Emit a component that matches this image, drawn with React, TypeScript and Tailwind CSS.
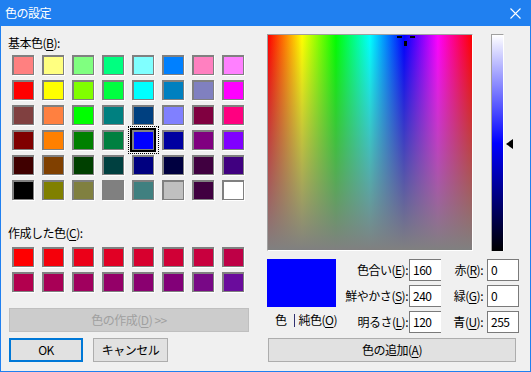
import React from 'react';

const basicColors = [
  ['#FF8080', '#FFFF80', '#80FF80', '#00FF80', '#80FFFF', '#0080FF', '#FF80C0', '#FF80FF'],
  ['#FF0000', '#FFFF00', '#80FF00', '#00FF40', '#00FFFF', '#0080C0', '#8080C0', '#FF00FF'],
  ['#804040', '#FF8040', '#00FF00', '#008080', '#004080', '#8080FF', '#800040', '#FF0080'],
  ['#800000', '#FF8000', '#008000', '#008040', '#0000FF', '#0000A0', '#800080', '#8000FF'],
  ['#400000', '#804000', '#004000', '#004040', '#000080', '#000040', '#400040', '#400080'],
  ['#000000', '#808000', '#808040', '#808080', '#408080', '#C0C0C0', '#400040', '#FFFFFF'],
];

const customColors = [
  ['#FF0000', '#F5000A', '#EB0018', '#E10024', '#D7002E', '#D00036', '#C8003E', '#BE0046'],
  ['#B2004E', '#A80056', '#A0005E', '#940068', '#8A0070', '#820078', '#780886', '#6A0C9C'],
];

const Swatch: React.FC<{ color: string; selected?: boolean }> = ({ color, selected }) => (
  <div className="relative w-[22px] h-[20px]">
    <div
      className="w-full h-full border-t-2 border-l-2 border-r border-b border-[#808080] shadow-[1px_1px_0_#ffffff]"
      style={{ backgroundColor: color }}
    />
    {selected && (
      <>
        <div className="absolute -left-[2px] -top-[2px] -right-[2px] -bottom-[2px] border-2 border-black" />
        <div className="absolute -left-[4px] -top-[4px] -right-[5px] -bottom-[4px] border border-dotted border-black" />
      </>
    )}
  </div>
);

const Acc: React.FC<{ k: string }> = ({ k }) => (
  <>
    (<span className="underline underline-offset-2">{k}</span>)
  </>
);

export default function App() {
  return (
    <div className="w-[531px] h-[372px] flex flex-col bg-[#f0f0f0] border border-t-0 border-[#2080f0] text-[12px] leading-[16px] tracking-[-0.5px] text-black font-['Meiryo_UI','Noto_Sans_CJK_JP',sans-serif] overflow-hidden">
      <div className="h-[26px] shrink-0 bg-[#2080f0] flex items-center justify-between pl-[4px] pr-[9px] text-white">
        <span>色の設定</span>
        <svg width="11" height="11" viewBox="0 0 11 11">
          <path d="M0.5 0.5 L10.5 10.5 M10.5 0.5 L0.5 10.5" stroke="#ffffff" strokeWidth="1.1" />
        </svg>
      </div>
      <div className="flex flex-1">
        <div className="w-[266px] shrink-0 pl-[7px] pt-[9px] flex flex-col">
          <div className="h-[16px]">
            基本色<Acc k="B" />:
          </div>
          <div className="mt-[4px] ml-[4px] grid grid-cols-[repeat(8,22px)] gap-x-[8px] gap-y-[5px]">
            {basicColors.map((row, r) =>
              row.map((c, i) => <Swatch key={`${r}-${i}`} color={c} selected={r === 3 && i === 4} />)
            )}
          </div>
          <div className="mt-[25px] h-[16px]">
            作成した色<Acc k="C" />:
          </div>
          <div className="mt-[6px] ml-[4px] grid grid-cols-[repeat(8,22px)] gap-x-[8px] gap-y-[5px]">
            {customColors.map((row, r) => row.map((c, i) => <Swatch key={`${r}-${i}`} color={c} />))}
          </div>
          <div className="mt-[16px] ml-[1px] w-[240px] h-[24px] flex items-center justify-center bg-[#cccccc] border border-[#bfbfbf] text-[#a0a0a0]">
            色の作成<Acc k="D" />&nbsp;&gt;&gt;
          </div>
          <div className="mt-[6px] ml-[1px] flex gap-[10px]">
            <div className="w-[74px] h-[24px] flex items-center justify-center bg-[#e1e1e1] border-2 border-[#0078d7]">
              OK
            </div>
            <div className="w-[75px] h-[24px] flex items-center justify-center bg-[#e1e1e1] border border-[#adadad]">
              キャンセル
            </div>
          </div>
        </div>
        <div className="flex-1 pt-[8px] flex flex-col">
          <div className="flex items-start">
            <div className="relative w-[206px] h-[217px] border-t border-l border-[#a0a0a0] border-r border-r-white border-b border-b-white bg-[linear-gradient(to_bottom,rgba(128,128,128,0),#808080),linear-gradient(to_right,#ff0000,#ffff00_16.7%,#00ff00_33.3%,#00ffff_50%,#0000ff_66.7%,#ff00ff_83.3%,#ff0000)]">
              <div className="absolute left-[129px] top-[1px] w-[5px] h-[2px] bg-black" />
              <div className="absolute left-[142px] top-[1px] w-[5px] h-[2px] bg-black" />
              <div className="absolute left-[136px] top-[6px] w-[3px] h-[5px] bg-black" />
            </div>
            <div className="relative ml-[18px] w-[13px] h-[217px] border-t border-l border-[#a0a0a0] border-r border-r-white bg-[linear-gradient(to_bottom,#ffffff,#0000ff_50%,#000000)]">
              <svg className="absolute left-[14px] top-[104px]" width="8" height="10" viewBox="0 0 8 10">
                <path d="M0 5 L7 0 L7 10 Z" fill="#000000" />
              </svg>
            </div>
          </div>
          <div className="mt-[8px] flex">
            <div className="w-[69px] shrink-0 flex flex-col">
              <div className="w-[69px] h-[48px] bg-[#0000ff]" />
              <div className="mt-[5px] h-[16px] flex items-center pl-[8px] whitespace-nowrap">
                <span className="shrink-0">色</span>
                <span className="block shrink-0 ml-[7px] mr-[4px] w-[1px] h-[13px] bg-[#303070]" />
                <span className="shrink-0">
                  純色<Acc k="O" />
                </span>
              </div>
            </div>
            <div className="grid grid-cols-[73px_32px_46px_32px] grid-rows-[repeat(3,22px)] gap-y-[4px]">
              {[
                ['色合い', 'E', '160', '赤', 'R', '0'],
                ['鮮やかさ', 'S', '240', '緑', 'G', '0'],
                ['明るさ', 'L', '120', '青', 'U', '255'],
              ].map(([l1, k1, v1, l2, k2, v2]) => (
                <React.Fragment key={k1}>
                  <div className="flex items-center justify-end pr-[1px] whitespace-nowrap">
                    {l1}
                    <Acc k={k1} />:
                  </div>
                  <div className="bg-white border-t border-l border-b border-[#7a7a7a] flex items-center pl-[3px]">
                    {v1}
                  </div>
                  <div className="flex items-center justify-end pr-[4px] whitespace-nowrap">
                    {l2}
                    <Acc k={k2} />:
                  </div>
                  <div className="bg-white border border-[#7a7a7a] flex items-center pl-[3px]">{v2}</div>
                </React.Fragment>
              ))}
            </div>
          </div>
          <div className="mt-[5px] ml-[1px] w-[248px] h-[24px] flex items-center justify-center bg-[#e1e1e1] border border-[#adadad]">
            色の追加<Acc k="A" />
          </div>
        </div>
      </div>
    </div>
  );
}
